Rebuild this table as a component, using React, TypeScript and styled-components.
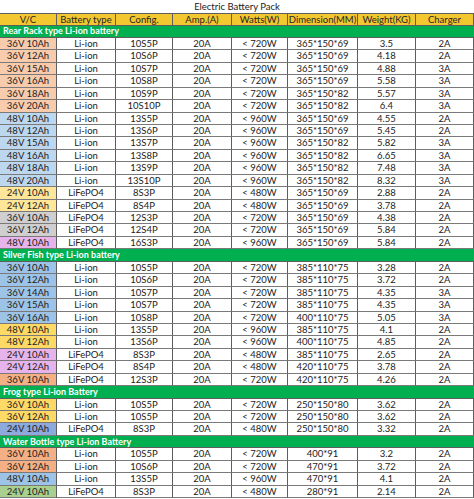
import React from "react";
import styled, { createGlobalStyle } from "styled-components";

const GlobalStyle = createGlobalStyle`
  html, body {
    margin: 0;
    padding: 0;
    background: #fff;
  }
`;

const COLS = "57px 59px 57px 59px 56px 70px 58px 58px";

type Row = [string, string, string, string, string, string, string, string];
type Group = { title: string; rows: { bg: string; cells: Row }[] };

const r = (
  bg: string,
  vc: string,
  type: string,
  cfg: string,
  watts: string,
  dim: string,
  kg: string,
  chg: string
) => ({ bg, cells: [vc, type, cfg, "20A", "< " + watts, dim, kg, chg] as Row });

const groups: Group[] = [
  {
    title: "Rear Rack type Li-ion battery",
    rows: [
      r("#f8cbad", "36V 10Ah", "Li-ion", "10S5P", "720W", "365*150*69", "3.5", "2A"),
      r("#f8cbad", "36V 12Ah", "Li-ion", "10S6P", "720W", "365*150*69", "4.18", "2A"),
      r("#f8cbad", "36V 15Ah", "Li-ion", "10S7P", "720W", "365*150*69", "4.88", "3A"),
      r("#f8cbad", "36V 16Ah", "Li-ion", "10S8P", "720W", "365*150*69", "5.58", "3A"),
      r("#f8cbad", "36V 18Ah", "Li-ion", "10S9P", "720W", "365*150*82", "5.57", "3A"),
      r("#f8cbad", "36V 20Ah", "Li-ion", "10S10P", "720W", "365*150*82", "6.4", "3A"),
      r("#bdd7ee", "48V 10Ah", "Li-ion", "13S5P", "960W", "365*150*69", "4.55", "2A"),
      r("#bdd7ee", "48V 12Ah", "Li-ion", "13S6P", "960W", "365*150*69", "5.45", "2A"),
      r("#bdd7ee", "48V 15Ah", "Li-ion", "13S7P", "960W", "365*150*82", "5.82", "3A"),
      r("#bdd7ee", "48V 16Ah", "Li-ion", "13S8P", "960W", "365*150*82", "6.65", "3A"),
      r("#bdd7ee", "48V 18Ah", "Li-ion", "13S9P", "960W", "365*150*82", "7.48", "3A"),
      r("#bdd7ee", "48V 20Ah", "Li-ion", "13S10P", "960W", "365*150*82", "8.32", "3A"),
      r("#ffe699", "24V 10Ah", "LiFePO4", "8S3P", "480W", "365*150*69", "2.88", "2A"),
      r("#ffe699", "24V 12Ah", "LiFePO4", "8S4P", "480W", "365*150*69", "3.78", "2A"),
      r("#d0cece", "36V 10Ah", "LiFePO4", "12S3P", "720W", "365*150*69", "4.38", "2A"),
      r("#d0cece", "36V 12Ah", "LiFePO4", "12S4P", "720W", "365*150*69", "5.84", "2A"),
      r("#e6b4ea", "48V 10Ah", "LiFePO4", "16S3P", "960W", "365*150*69", "5.84", "2A"),
    ],
  },
  {
    title: "Silver Fish type Li-ion battery",
    rows: [
      r("#9dc3e6", "36V 10Ah", "Li-ion", "10S5P", "720W", "385*110*75", "3.28", "2A"),
      r("#9dc3e6", "36V 12Ah", "Li-ion", "10S6P", "720W", "385*110*75", "3.72", "2A"),
      r("#9dc3e6", "36V 14Ah", "Li-ion", "10S7P", "720W", "385*110*75", "4.35", "3A"),
      r("#9dc3e6", "36V 15Ah", "Li-ion", "10S7P", "720W", "385*110*75", "4.35", "3A"),
      r("#9dc3e6", "36V 16Ah", "Li-ion", "10S8P", "720W", "400*110*75", "5.05", "3A"),
      r("#ffd966", "48V 10Ah", "Li-ion", "13S5P", "960W", "385*110*75", "4.1", "2A"),
      r("#ffd966", "48V 12Ah", "Li-ion", "13S6P", "960W", "400*110*75", "4.85", "2A"),
      r("#e6b4ea", "24V 10Ah", "LiFePO4", "8S3P", "480W", "385*110*75", "2.65", "2A"),
      r("#e6b4ea", "24V 12Ah", "LiFePO4", "8S4P", "480W", "420*110*75", "3.78", "2A"),
      r("#f4b084", "36V 10Ah", "LiFePO4", "12S3P", "720W", "420*110*75", "4.26", "2A"),
    ],
  },
  {
    title: "Frog type Li-ion Battery",
    rows: [
      r("#ffd966", "36V 10Ah", "Li-ion", "10S5P", "720W", "250*150*80", "3.62", "2A"),
      r("#ffd966", "36V 12Ah", "Li-ion", "10S5P", "720W", "250*150*80", "3.62", "2A"),
      r("#8ea9db", "24V 10Ah", "LiFePO4", "8S3P", "480W", "250*150*80", "3.32", "2A"),
    ],
  },
  {
    title: "Water Bottle type Li-ion Battery",
    rows: [
      r("#f4b084", "36V 10Ah", "Li-ion", "10S5P", "720W", "400*91", "3.2", "2A"),
      r("#f4b084", "36V 12Ah", "Li-ion", "10S6P", "720W", "470*91", "3.72", "2A"),
      r("#9dc3e6", "48V 10Ah", "Li-ion", "13S5P", "960W", "470*91", "4.1", "2A"),
      r("#a9d08e", "24V 10Ah", "LiFePO4", "8S3P", "480W", "280*91", "2.14", "2A"),
    ],
  },
];

const headers = [
  "V/C",
  "Battery type",
  "Config.",
  "Amp.(A)",
  "Watts(W)",
  "Dimension(MM)",
  "Weight(KG)",
  "Charger",
];

const App = () => {
  return (
    <Sheet>
      <GlobalStyle />
      <Title>Electric Battery Pack</Title>
      <Grid>
        {headers.map((h) => (
          <HeadCell key={h}>{h}</HeadCell>
        ))}
      </Grid>
      {groups.map((g) => (
        <React.Fragment key={g.title}>
          <Section>{g.title}</Section>
          {g.rows.map((row, i) => (
            <Grid key={i}>
              {row.cells.map((c, j) => (
                <Cell key={j} $bg={j === 0 ? row.bg : "#fff"}>
                  {c}
                </Cell>
              ))}
            </Grid>
          ))}
        </React.Fragment>
      ))}
    </Sheet>
  );
};

export default App;

const Sheet = styled.div`
  width: 474px;
  height: 499px;
  overflow: hidden;
  font-family: Lato, "Open Sans", sans-serif;
  color: #222;
  background: #fff;
`;

const Title = styled.div`
  height: 13px;
  line-height: 14px;
  text-align: center;
  font-size: 9.5px;
  color: #1a1a1a;
`;

const Grid = styled.div`
  display: grid;
  grid-template-columns: ${COLS};
  height: 12.45px;
`;

const Cell = styled.div<{ $bg: string }>`
  box-sizing: border-box;
  background: ${(p) => p.$bg};
  border-right: 1px solid #5e5e5e;
  border-bottom: 1px solid #7a7a7a;
  font-size: 9.5px;
  line-height: 12px;
  text-align: center;
  white-space: nowrap;
  overflow: hidden;
`;

const HeadCell = styled(Cell).attrs({ $bg: "#f2c72f" })`
  height: 13px;
  border-top: 1px solid #5e5e5e;
  border-bottom: 1px solid #5e5e5e;
  line-height: 11px;
  color: #262626;
`;

const Section = styled.div`
  box-sizing: border-box;
  height: 12.45px;
  background: #00b050;
  color: #fff;
  font-weight: 700;
  font-size: 9px;
  line-height: 12px;
  padding-left: 3px;
  border-bottom: 1px solid #5e5e5e;
`;
